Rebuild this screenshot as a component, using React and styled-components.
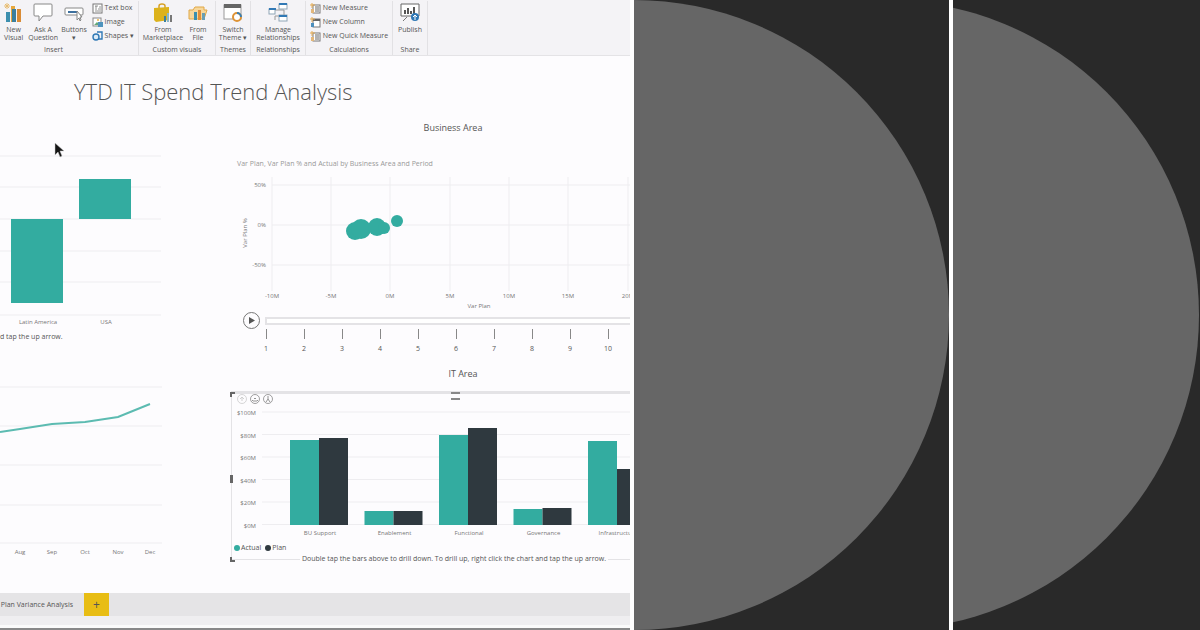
import React from 'react';
import styled, { createGlobalStyle } from 'styled-components';

const TEAL = '#33aca0';
const SLATE = '#2f393f';

const HINT = 'Double tap the bars above to drill down. To drill up, right click the chart and tap the up arrow.';

const scatterColumns = [
  { x: 42, label: '-10M' },
  { x: 101, label: '-5M' },
  { x: 160, label: '0M' },
  { x: 220, label: '5M' },
  { x: 279, label: '10M' },
  { x: 338, label: '15M' },
  { x: 398, label: '20M' },
];

const scatterRows = [
  { y: 15, label: '50%' },
  { y: 55, label: '0%' },
  { y: 95, label: '-50%' },
];

const bubbles = [
  { x: 125, y: 61, r: 9 },
  { x: 131, y: 59, r: 10 },
  { x: 147, y: 57, r: 9 },
  { x: 154, y: 58, r: 6 },
  { x: 167, y: 51, r: 6 },
];

const periods = [1, 2, 3, 4, 5, 6, 7, 8, 9, 10];

const spendRows = ['$100M', '$80M', '$60M', '$40M', '$20M', '$0M'];

const areas = [
  { label: 'BU Support', actual: 85, plan: 87 },
  { label: 'Enablement', actual: 14, plan: 14 },
  { label: 'Functional', actual: 90, plan: 97 },
  { label: 'Governance', actual: 16, plan: 17 },
  { label: 'Infrastructure', actual: 84, plan: 56 },
];

const months = [
  { x: 20, label: 'Aug' },
  { x: 52, label: 'Sep' },
  { x: 85, label: 'Oct' },
  { x: 118, label: 'Nov' },
  { x: 150, label: 'Dec' },
];

export default function App() {
  return (
    <>
      <GlobalStyle />
      <Gallery>
        <Report>
          <Ribbon>
            <RibbonGroup $width={170} $align="flex-end" name="Insert">
              <BigTool $width={28} lines={['New', 'Visual']} icon={<NewVisualIcon />} />
              <BigTool $width={31} lines={['Ask A', 'Question']} icon={<AskIcon />} />
              <BigTool $width={31} lines={['Buttons', '▾']} icon={<ButtonsIcon />} />
              <ToolStack>
                <SmallTool><TextBoxIcon />Text box</SmallTool>
                <SmallTool><ImageIcon />Image</SmallTool>
                <SmallTool><ShapesIcon />Shapes ▾</SmallTool>
              </ToolStack>
            </RibbonGroup>
            <RibbonGroup $width={77} name="Custom visuals">
              <BigTool $width={42} lines={['From', 'Marketplace']} icon={<MarketIcon />} />
              <BigTool $width={28} lines={['From', 'File']} icon={<FileIcon />} />
            </RibbonGroup>
            <RibbonGroup $width={35} name="Themes">
              <BigTool $width={32} lines={['Switch', 'Theme ▾']} icon={<ThemeIcon />} />
            </RibbonGroup>
            <RibbonGroup $width={55} name="Relationships">
              <BigTool $width={50} lines={['Manage', 'Relationships']} icon={<RelationsIcon />} />
            </RibbonGroup>
            <RibbonGroup $width={87} name="Calculations">
              <ToolStack>
                <SmallTool><CalcIcon />New Measure</SmallTool>
                <SmallTool><CalcIcon $column />New Column</SmallTool>
                <SmallTool><CalcIcon />New Quick Measure</SmallTool>
              </ToolStack>
            </RibbonGroup>
            <RibbonGroup $width={35} name="Share">
              <BigTool $width={32} lines={['Publish']} icon={<PublishIcon />} />
            </RibbonGroup>
          </Ribbon>

          <Canvas>
            <ReportTitle>YTD IT Spend Trend Analysis</ReportTitle>
            <Pointer viewBox="0 0 10 17">
              <path d="M1 1v12l3-3 2 5 2-1-2-5h4z" fill="#151515" stroke="#c8c8c8" strokeWidth="0.5" />
            </Pointer>
            <Columns>
              <LeftColumn>
                <VarianceChart />
                <LeftHint>d tap the up arrow.</LeftHint>
                <TrendChart />
              </LeftColumn>
              <RightColumn>
                <AreaHeading $inset={46}>Business Area</AreaHeading>
                <VisualTitle>Var Plan, Var Plan % and Actual by Business Area and Period</VisualTitle>
                <ScatterChart />
                <Player>
                  <PlayButton aria-label="Play">
                    <svg width="6" height="7" viewBox="0 0 7 8"><path d="M0 0l7 4-7 4z" fill="#555" /></svg>
                  </PlayButton>
                  <Track type="range" min="1" max="12" defaultValue="1" aria-label="Period" />
                  <Periods>
                    {periods.map((period) => <Period key={period}>{period}</Period>)}
                  </Periods>
                </Player>
                <AreaHeading $inset={66}>IT Area</AreaHeading>
                <SelectedVisual>
                  <Handle $top="-2px" />
                  <Handle $top="81px" $side />
                  <Handle $top="163px" $bottom />
                  <Grip />
                  <DrillBar>
                    <DrillButton aria-label="Drill up" $faded><DrillIcon d="M5 7V3M3 5l2-2 2 2" /></DrillButton>
                    <DrillButton aria-label="Next level"><DrillIcon d="M2 6l1 1h4l1-1M4 4l1 1 1-1" /></DrillButton>
                    <DrillButton aria-label="Expand"><DrillIcon d="M5 2v3M5 5L3 8M5 5l2 3" /></DrillButton>
                  </DrillBar>
                  <SpendChart />
                  <Legend>
                    <LegendItem $color={TEAL}>Actual</LegendItem>
                    <LegendItem $color={SLATE}>Plan</LegendItem>
                  </Legend>
                </SelectedVisual>
                <Hint>{HINT}</Hint>
              </RightColumn>
            </Columns>
          </Canvas>

          <PageTabs>
            <PageTab>Plan Variance Analysis</PageTab>
            <AddPage aria-label="Add page">+</AddPage>
          </PageTabs>
          <StatusBar />
        </Report>
        <Slide viewBox="0 0 315 630" preserveAspectRatio="xMinYMid slice">
          <circle cx="0" cy="315" r="315" fill="#666" />
        </Slide>
        <Slide viewBox="0 0 247 630" preserveAspectRatio="xMinYMid slice">
          <circle cx="-69" cy="315" r="315" fill="#666" />
        </Slide>
      </Gallery>
    </>
  );
}

const RibbonGroup = ({ name, children, $width, $align }) => (
  <Group $width={$width}>
    <GroupTools $align={$align}>{children}</GroupTools>
    <GroupName>{name}</GroupName>
  </Group>
);

const BigTool = ({ icon, lines, $width }) => (
  <BigButton $width={$width}>
    {icon}
    {lines.map((line) => <span key={line}>{line}</span>)}
  </BigButton>
);

const NewVisualIcon = () => (
  <BigIcon viewBox="0 0 20 20">
    <rect x="2" y="9" width="4" height="10" fill="#3d8fae" />
    <rect x="7" y="3" width="4" height="16" fill="#e6a73c" />
    <rect x="8" y="6" width="4" height="13" fill="#3b7f9e" />
    <rect x="13" y="6" width="4" height="13" fill="#d98b35" />
    <path d="M3 0v6M0 3h6M1 1l4 4M5 1L1 5" stroke="#e8bd72" strokeWidth="1" />
  </BigIcon>
);

const AskIcon = () => (
  <BigIcon viewBox="0 0 20 20">
    <path d="M2 1h16q1 0 1 1v10q0 1-1 1H10l-4 5v-5H2q-1 0-1-1V2q0-1 1-1z" fill="#fff" stroke="#888" />
  </BigIcon>
);

const ButtonsIcon = () => (
  <BigIcon viewBox="0 0 20 20">
    <rect x="1" y="5" width="18" height="7" rx="1" fill="#fff" stroke="#888" />
    <path d="M4 9h10" stroke="#3d6f9e" strokeWidth="2" />
    <path d="M13 8v9l2-2 1 3 1-1-1-3h2z" fill="#fff" stroke="#888" />
  </BigIcon>
);

const TextBoxIcon = () => (
  <SmallIcon viewBox="0 0 11 11">
    <rect x="1" y="1" width="9" height="9" fill="#fff" stroke="#777" />
    <path d="M3 3h3M4 3v4M7 4h2M6 6h3M3 8h6" stroke="#777" strokeWidth="0.8" />
  </SmallIcon>
);

const ImageIcon = () => (
  <SmallIcon viewBox="0 0 11 11">
    <rect x="1" y="1" width="8" height="8" fill="#fff" stroke="#888" />
    <path d="M2 8l3-3 2 2 1-1v2z" fill="#64a878" />
    <rect x="6" y="5" width="5" height="5" fill="#4f93bd" />
    <circle cx="6" cy="3" r="1" fill="#e8b34a" />
  </SmallIcon>
);

const ShapesIcon = () => (
  <SmallIcon viewBox="0 0 11 11">
    <circle cx="4" cy="6" r="3" fill="#dcebf7" stroke="#2f78b5" strokeWidth="1.4" />
    <path d="M5 1h5v7H6" fill="none" stroke="#2f78b5" strokeWidth="1.4" />
  </SmallIcon>
);

const MarketIcon = () => (
  <BigIcon viewBox="0 0 20 20">
    <path d="M6 6V3q0-2 3-2t3 2v3" fill="none" stroke="#d7a126" strokeWidth="1.5" />
    <path d="M1 5l15-1v13l-13 2-2-2z" fill="#dcb21b" />
    <rect x="11" y="13" width="2" height="6" fill="#3b7f9e" />
    <rect x="14" y="10" width="2" height="9" fill="#8bb8c9" />
    <rect x="17" y="12" width="2" height="7" fill="#777" />
  </BigIcon>
);

const FileIcon = () => (
  <BigIcon viewBox="0 0 20 20">
    <path d="M1 16V7h4l2-3h9v3h3l-3 9z" fill="#f7d79a" stroke="#e0a746" />
    <rect x="6" y="9" width="3" height="8" fill="#3b8fae" />
    <rect x="10" y="7" width="3" height="10" fill="#e28f37" />
    <rect x="14" y="10" width="3" height="7" fill="#6a9fb4" />
  </BigIcon>
);

const ThemeIcon = () => (
  <BigIcon viewBox="0 0 20 20">
    <rect x="1" y="2" width="17" height="14" fill="#fff" stroke="#999" />
    <rect x="1" y="1" width="17" height="4" fill="#666" />
    <circle cx="14" cy="14" r="4" fill="#fff" stroke="#de9335" strokeWidth="2" />
    <path d="M14 10a4 4 0 0 1 4 4" fill="none" stroke="#397eb2" strokeWidth="2" />
  </BigIcon>
);

const RelationsIcon = () => (
  <BigIcon viewBox="0 0 20 20">
    <path d="M5 9V7h11v6H7v4" fill="none" stroke="#999" />
    <rect x="1" y="6" width="6" height="5" fill="#fff" stroke="#8fa6b6" />
    <rect x="11" y="1" width="8" height="5" fill="#fff" stroke="#8fa6b6" />
    <rect x="11" y="12" width="8" height="6" fill="#fff" stroke="#8fa6b6" />
    <path d="M1 6h7M11 1h8M11 13h8" stroke="#3279b5" strokeWidth="2" />
  </BigIcon>
);

const CalcIcon = ({ $column }) => (
  <SmallIcon viewBox="0 0 11 11">
    <rect x="3" y="2" width="7" height="8" fill="#fff" stroke="#777" />
    <path d={$column ? 'M3 3h7' : 'M5 4h4M5 6h4M5 8h4'} stroke="#666" strokeWidth={$column ? 2 : 1} />
    <path d="M2 0v5M0 2h5" stroke="#e5ac54" />
    <rect x="1" y="6" width="3" height="4" fill={$column ? '#4d8fbd' : '#e3b77a'} />
  </SmallIcon>
);

const PublishIcon = () => (
  <BigIcon viewBox="0 0 20 20">
    <path d="M1 1h18v12H1z" fill="#fff" stroke="#666" />
    <path d="M5 11V7M8 11V5M11 11V8M14 11V4" stroke="#555" strokeWidth="2" />
    <path d="M7 14l-4 4" stroke="#777" />
    <circle cx="15" cy="14" r="4" fill="#2f78b5" />
    <path d="M15 17v-5M13 14l2-2 2 2" fill="none" stroke="#fff" />
  </BigIcon>
);

const DrillIcon = ({ d }) => (
  <svg width="10" height="10" viewBox="0 0 10 10">
    <circle cx="5" cy="5" r="4.5" fill="none" stroke="currentColor" strokeWidth="0.8" />
    <path d={d} fill="none" stroke="currentColor" strokeWidth="0.9" />
  </svg>
);

const VarianceChart = () => (
  <Chart viewBox="0 0 230 181">
    {[6, 37, 69, 101, 132, 165].map((y) => (
      <GridLine key={y} x1="0" x2="161" y1={y} y2={y} />
    ))}
    <rect x="11" y="69" width="52" height="84" fill={TEAL} />
    <rect x="79" y="29" width="52" height="40" fill={TEAL} />
    <AxisLabel x="38" y="174" textAnchor="middle">Latin America</AxisLabel>
    <AxisLabel x="106" y="174" textAnchor="middle">USA</AxisLabel>
  </Chart>
);

const TrendChart = () => (
  <Chart viewBox="0 0 230 178">
    {[7, 46, 85, 125, 163].map((y) => (
      <GridLine key={y} x1="0" x2="162" y1={y} y2={y} />
    ))}
    <polyline points="0,52 20,49 52,44 85,42 118,37 150,24" fill="none" stroke="#5cbbb1" strokeWidth="2" />
    {months.map(({ x, label }) => (
      <AxisLabel key={label} x={x} y="174" textAnchor="middle">{label}</AxisLabel>
    ))}
  </Chart>
);

const ScatterChart = () => (
  <Chart viewBox="0 0 400 142">
    {scatterRows.map(({ y, label }) => (
      <g key={label}>
        <GridLine x1="42" x2="400" y1={y} y2={y} />
        <AxisLabel x="36" y={y + 2} textAnchor="end">{label}</AxisLabel>
      </g>
    ))}
    {scatterColumns.map(({ x, label }) => (
      <g key={label}>
        <GridLine x1={x} x2={x} y1="7" y2="121" />
        <AxisLabel x={x} y="128" textAnchor="middle">{label}</AxisLabel>
      </g>
    ))}
    {bubbles.map(({ x, y, r }) => <circle key={x} cx={x} cy={y} r={r} fill={TEAL} />)}
    <AxisLabel x="249" y="138" textAnchor="middle">Var Plan</AxisLabel>
    <AxisLabel transform="translate(17 63) rotate(-90)" textAnchor="middle">Var Plan %</AxisLabel>
  </Chart>
);

const SpendChart = () => (
  <Chart viewBox="0 0 398 134">
    {spendRows.map((label, i) => (
      <g key={label}>
        <GridLine x1="30" x2="398" y1={8 + i * 22.5} y2={8 + i * 22.5} />
        <AxisLabel x="24" y={11 + i * 22.5} textAnchor="end">{label}</AxisLabel>
      </g>
    ))}
    {areas.map(({ label, actual, plan }, i) => {
      const x = 58 + i * 74.5;
      return (
        <g key={label}>
          <rect x={x} y={121 - actual} width="29" height={actual} fill={TEAL} />
          <rect x={x + 29} y={121 - plan} width="29" height={plan} fill={SLATE} />
          <AxisLabel x={x + 30} y="131" textAnchor="middle">{label}</AxisLabel>
        </g>
      );
    })}
  </Chart>
);

const GlobalStyle = createGlobalStyle`
  * {
    box-sizing: border-box;
  }

  body {
    margin: 0;
    background: #fff;
    font-family: 'Open Sans', 'Noto Sans', sans-serif;
  }

  button {
    border: 0;
    padding: 0;
    background: none;
    color: inherit;
    font-family: inherit;
  }
`;

const Gallery = styled.main`
  display: grid;
  grid-template-columns: minmax(0, 630fr) minmax(0, 315fr) minmax(0, 247fr);
  gap: 4px;
  min-height: 100vh;
`;

const Slide = styled.svg`
  width: 100%;
  height: 100%;
  background: #292929;
`;

const Report = styled.section`
  display: flex;
  flex-direction: column;
  overflow: hidden;
  background: #fdfcfe;
  color: #555;
`;

const Ribbon = styled.header`
  display: flex;
  padding-top: 1px;
  margin-left: -31px;
  background: #f4f3f6;
  border-bottom: 1px solid #e4e3e6;
`;

const Group = styled.div`
  display: flex;
  flex-direction: column;
  flex: none;
  width: ${({ $width }) => $width}px;
  border-right: 1px solid #e2e1e4;
`;

const GroupTools = styled.div`
  display: flex;
  justify-content: ${({ $align }) => $align || 'center'};
  height: 44px;
  padding: 0 2px;
`;

const GroupName = styled.span`
  font-size: 7px;
  line-height: 10px;
  text-align: center;
  white-space: nowrap;
`;

const BigButton = styled.button`
  display: flex;
  flex-direction: column;
  align-items: center;
  width: ${({ $width }) => $width}px;
  padding-top: 2px;
  font-size: 7px;
  line-height: 8px;
  white-space: nowrap;
`;

const BigIcon = styled.svg`
  width: 20px;
  height: 20px;
  margin-bottom: 3px;
`;

const ToolStack = styled.div`
  display: flex;
  flex-direction: column;
  padding: 0 2px;
`;

const SmallTool = styled.button`
  display: flex;
  align-items: center;
  gap: 2px;
  height: 14px;
  font-size: 7px;
  line-height: 14px;
  white-space: nowrap;
`;

const SmallIcon = styled.svg`
  width: 11px;
  height: 11px;
`;

const Canvas = styled.div`
  position: relative;
  flex: 1;
  padding: 17px 0 20px;
`;

const ReportTitle = styled.h1`
  margin: 0;
  padding-left: 74px;
  font-size: 22px;
  font-weight: 300;
  line-height: 36px;
  white-space: nowrap;
`;

const Pointer = styled.svg`
  position: absolute;
  top: 86px;
  left: 54px;
  width: 10px;
  height: 17px;
`;

const Columns = styled.div`
  display: grid;
  grid-template-columns: minmax(0, 230fr) minmax(0, 400fr);
`;

const LeftColumn = styled.div`
  padding-top: 41px;
`;

const RightColumn = styled.div`
  padding-top: 12px;
`;

const Chart = styled.svg`
  display: block;
  width: 100%;
  height: auto;
`;

const GridLine = styled.line`
  stroke: #eeedf0;
  stroke-width: 1;
`;

const AxisLabel = styled.text`
  fill: #777;
  font-size: 6px;
`;

const LeftHint = styled.p`
  margin: 0 0 37px;
  font-size: 7px;
  line-height: 12px;
`;

const AreaHeading = styled.h2`
  margin: 0;
  padding-left: ${({ $inset }) => $inset}px;
  font-size: 9px;
  font-weight: 400;
  line-height: 14px;
  text-align: center;
`;

const VisualTitle = styled.h3`
  margin: 23px 0 0 7px;
  color: #999;
  font-size: 7px;
  font-weight: 400;
  line-height: 12px;
`;

const Player = styled.div`
  display: grid;
  grid-template-columns: 22px minmax(0, 1fr);
  align-items: center;
  padding-left: 13px;
  margin-bottom: 13px;
`;

const PlayButton = styled.button`
  display: flex;
  align-items: center;
  justify-content: center;
  width: 17px;
  height: 17px;
  border: 1px solid #777;
  border-radius: 50%;
`;

const Track = styled.input`
  appearance: none;
  width: 100%;
  height: 8px;
  margin: 0;
  border: 2px solid #e4e3e6;
  border-right: 0;
  background: #fff;

  &::-webkit-slider-thumb {
    appearance: none;
    width: 1px;
    height: 4px;
  }
`;

const Periods = styled.div`
  grid-column: 2;
  display: flex;
  margin-left: -18px;
`;

const Period = styled.span`
  flex: none;
  width: 38px;
  font-size: 7px;
  line-height: 10px;
  text-align: center;

  &::before {
    content: '';
    display: block;
    width: 1px;
    height: 10px;
    margin: 0 auto 5px;
    background: #888;
  }
`;

const SelectedVisual = styled.section`
  position: relative;
  height: 169px;
  margin: 10px 0 0 1px;
  border: solid #e4e3e6;
  border-width: 3px 0 1px 1px;
`;

const Handle = styled.i`
  position: absolute;
  top: ${({ $top }) => $top};
  left: -2px;
  width: ${({ $side }) => ($side ? 3 : 5)}px;
  height: ${({ $side }) => ($side ? 8 : 5)}px;
  border: solid #666;
  border-width: ${({ $side, $bottom }) => ($side ? '0 0 0 3px' : $bottom ? '0 0 2px 2px' : '2px 0 0 2px')};
`;

const Grip = styled.i`
  position: absolute;
  top: -2px;
  left: 219px;
  width: 9px;
  height: 8px;
  border: solid #888;
  border-width: 2px 0;
`;

const DrillBar = styled.div`
  display: flex;
  gap: 3px;
  height: 10px;
  padding-left: 5px;
`;

const DrillButton = styled.button`
  width: 10px;
  height: 10px;
  color: ${({ $faded }) => ($faded ? '#ccc' : '#888')};

  svg {
    display: block;
  }
`;

const Legend = styled.div`
  display: flex;
  gap: 4px;
  padding-left: 2px;
  margin-top: 5px;
`;

const LegendItem = styled.span`
  display: flex;
  align-items: center;
  gap: 1px;
  font-size: 7px;
  line-height: 10px;

  &::before {
    content: '';
    width: 6px;
    height: 6px;
    border-radius: 50%;
    background: ${({ $color }) => $color};
  }
`;

const Hint = styled.p`
  position: relative;
  width: fit-content;
  margin: -7px auto 0;
  left: 24px;
  padding: 0 2px;
  background: #fdfcfe;
  font-size: 7px;
  line-height: 12px;
  white-space: nowrap;
`;

const PageTabs = styled.nav`
  display: flex;
  height: 23px;
  background: #e5e4e6;
`;

const PageTab = styled.button`
  display: flex;
  align-items: center;
  justify-content: flex-end;
  width: 84px;
  padding-right: 11px;
  font-size: 7px;
  white-space: nowrap;
`;

const AddPage = styled.button`
  width: 25px;
  background: #e8bd14;
  font-size: 12px;
`;

const StatusBar = styled.footer`
  height: 14px;
  background: #efeef0;
  border-bottom: 2px solid #888;
  box-shadow: inset 0 -3px 0 #fafafa;
`;
